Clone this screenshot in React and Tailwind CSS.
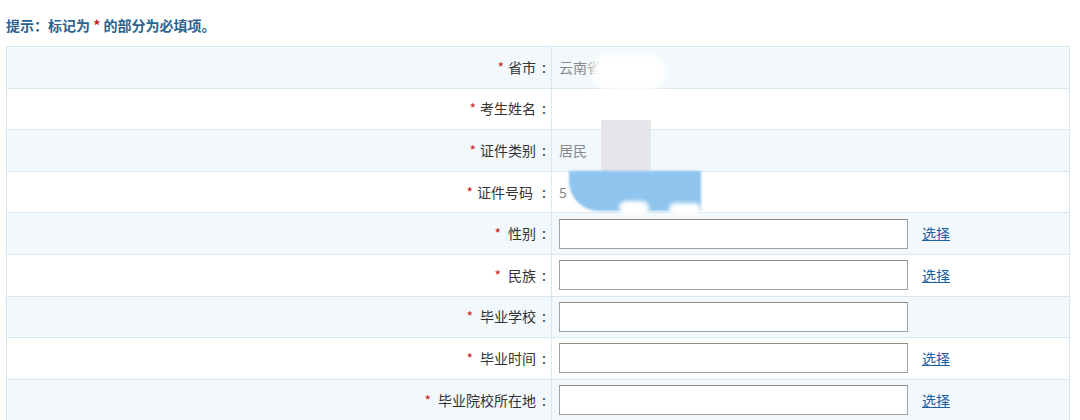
import React from 'react'

const rows = [
  { label: '省市', value: '云南省' },
  { label: '考生姓名', value: '' },
  { label: '证件类别', value: '居民' },
  { label: '证件号码 ', value: '5' },
  { label: ' 性别', input: true, pick: true },
  { label: ' 民族', input: true, pick: true },
  { label: ' 毕业学校', input: true },
  { label: ' 毕业时间', input: true, pick: true },
  { label: ' 毕业院校所在地', input: true, pick: true },
]

const FormRow = ({ row, index }) => {
  return (
    <div
      className={`flex h-[41.6px] border-b border-[#d9e7f1] ${
        index % 2 === 0 ? 'bg-[#f2f8fc]' : 'bg-white'
      }`}>
      <div className="w-[545px] shrink-0 border-r border-[#d9e7f1] flex items-center justify-end pr-[5px] text-[14px] text-[#333]">
        <span className="text-[#c81f1f] mr-[4px]">*</span>
        <span className="whitespace-pre">{row.label}</span>
        <span className="ml-[6px]">:</span>
      </div>
      <div className="flex-1 flex items-center pl-[7px] text-[14px]">
        {row.input ? (
          <>
            <input
              type="text"
              className="w-[349px] h-[30px] bg-white border border-[#a0a0a0] border-t-[#8a8a8a] outline-none"
            />
            {row.pick && (
              <a href="#" className="ml-[14px] text-[#1d5e9c] underline">
                选择
              </a>
            )}
          </>
        ) : (
          <span className="text-[#888]">{row.value}</span>
        )}
      </div>
    </div>
  )
}

export default function App() {
  return (
    <div
      className="w-[1080px] h-[420px] bg-white overflow-hidden"
      style={{ fontFamily: '"Noto Sans CJK SC", "Noto Sans", sans-serif' }}>
      <div className="h-[46px] pl-[6px] pt-[15px] text-[14px] font-bold text-[#2b6390]">
        提示：标记为 <span className="text-[#c81f1f]">*</span> 的部分为必填项。
      </div>
      <div className="relative ml-[6px] w-[1064px] border-t border-l border-r border-[#d9e7f1]">
        {rows.map((row, i) => (
          <FormRow key={i} row={row} index={i} />
        ))}
        {/* redaction overlays */}
        <div className="absolute left-[584px] top-[6px] w-[76px] h-[38px] bg-white/95 rounded-full blur-[3px]" />
        <div className="absolute left-[594px] top-[73px] w-[50px] h-[51px] bg-[#e4e6ea]" />
        <div className="absolute left-[562px] top-[124px] w-[132px] h-[40px] bg-[#8ec4ee] rounded-bl-[30px] blur-[1px]" />
        <div className="absolute left-[612px] top-[154px] w-[30px] h-[14px] bg-white rounded-full blur-[2px]" />
        <div className="absolute left-[662px] top-[156px] w-[32px] h-[12px] bg-white rounded-full blur-[2px]" />
      </div>
    </div>
  )
}
